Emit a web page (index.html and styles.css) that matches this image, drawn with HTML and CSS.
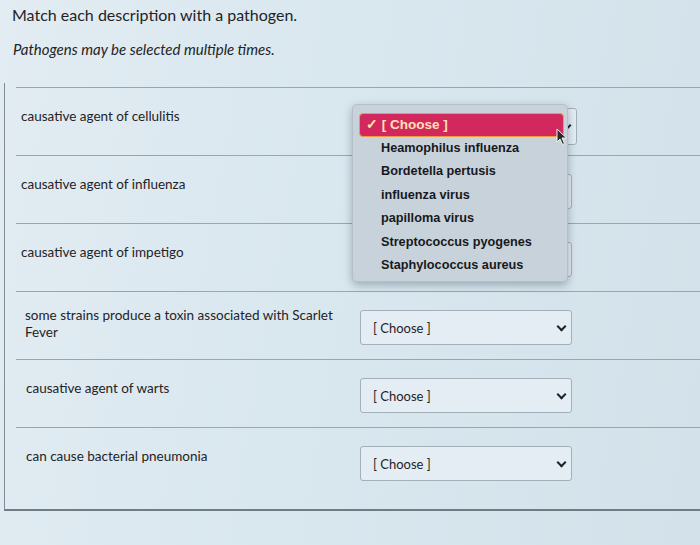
FILE: index.html
```html
<!DOCTYPE html>
<html>
<head>
	<link rel="stylesheet" href="styles.css">
	<title>Match each description with a pathogen</title>
</head>
<body>
	<div class="intro">
		<p class="title">Match each description with a pathogen.</p>
		<p class="note">Pathogens may be selected multiple times.</p>
	</div>

	<div class="quiz">
		<div class="row">
			<div class="label">causative agent of cellulitis</div>
			<div class="pick open">
				<div class="select under"><span>[ Choose ]</span><span class="chev"></span></div>
				<!-- open list of the first select -->
				<div class="menu">
					<div class="item current">&#10003; [ Choose ]</div>
					<div class="item">Heamophilus influenza</div>
					<div class="item">Bordetella pertusis</div>
					<div class="item">influenza virus</div>
					<div class="item">papilloma virus</div>
					<div class="item">Streptococcus pyogenes</div>
					<div class="item">Staphylococcus aureus</div>
				</div>
				<svg class="cursor" width="12" height="18" viewBox="0 0 12 18">
					<path d="M1 1 L1 14 L4 11 L6.5 16.5 L8.5 15.5 L6 10 L10.5 10 Z" fill="#2a2a2a" stroke="#f2f2f2" stroke-width="1"/>
				</svg>
			</div>
		</div>
		<div class="row">
			<div class="label">causative agent of influenza</div>
			<div class="pick">
				<div class="select under"><span>[ Choose ]</span><span class="chev"></span></div>
			</div>
		</div>
		<div class="row">
			<div class="label">causative agent of impetigo</div>
			<div class="pick">
				<div class="select under"><span>[ Choose ]</span><span class="chev"></span></div>
			</div>
		</div>
		<div class="row">
			<div class="label">some strains produce a toxin associated with Scarlet Fever</div>
			<div class="pick">
				<div class="select"><span>[ Choose ]</span><span class="chev"></span></div>
			</div>
		</div>
		<div class="row">
			<div class="label">causative agent of warts</div>
			<div class="pick">
				<div class="select"><span>[ Choose ]</span><span class="chev"></span></div>
			</div>
		</div>
		<div class="row last">
			<div class="label">can cause bacterial pneumonia</div>
			<div class="pick">
				<div class="select"><span>[ Choose ]</span><span class="chev"></span></div>
			</div>
		</div>
	</div>
</body>
</html>
```

FILE: styles.css
```css
body{
	margin:0;
	height:545px;
	overflow:hidden;
	background:linear-gradient(100deg, #e2ecf2 0%, #d9e7ef 45%, #d3e1ea 100%);
	font-family:Lato, "Liberation Sans", sans-serif;
	color:#1f2326;
}
.intro
{
	padding:5px 0 0 12px;
	height:83px;
	box-sizing:border-box;
}
.title
{
	margin:0;
	font-size:16px;
	line-height:20px;
}
.note
{
	margin:14px 0 0 1px;
	font-size:15px;
	font-style:italic;
	line-height:20px;
}
.quiz
{
	margin-left:4px;
	border-left:1px solid #7d8c96;
	border-bottom:2px solid #6f7c86;
	padding-top:4px;
}
.row
{
	margin-left:11px;
	border-top:1px solid #98a6b0;
	height:67px;
	display:flex;
}
.row.last
{
	height:81px;
}
.label
{
	width:320px;
	padding:20px 0 0 5px;
	font-size:13.5px;
	line-height:17px;
	box-sizing:border-box;
}
.row:nth-child(4) .label
{
	padding-top:15px;
	padding-left:9px;
}
.row:nth-child(5) .label,
.row:nth-child(6) .label
{
	padding-left:10px;
}
.pick
{
	margin-left:24px;
	padding-top:18px;
	position:relative;
}
.select
{
	width:212px;
	height:35px;
	box-sizing:border-box;
	border:1px solid #a3b0b9;
	border-radius:3px;
	background:#e4edf3;
	display:flex;
	align-items:center;
	justify-content:space-between;
	padding:0 6px 0 12px;
	font-size:13px;
}
/* selects hidden behind the open list */
.select.under span:first-child
{
	visibility:hidden;
}
.chev
{
	width:5px;
	height:5px;
	border-right:2px solid #1e2226;
	border-bottom:2px solid #1e2226;
	transform:rotate(45deg);
	margin-top:-3px;
}
.open
{
	z-index:2;
}
.open .select
{
	width:217px;
	height:37px;
	margin-top:2px;
}
.menu
{
	position:absolute;
	left:-8px;
	top:16px;
	width:216px;
	height:178px;
	box-sizing:border-box;
	padding:8px 3px 0 6px;
	background:#c8d2db;
	border:1px solid #b4bfc8;
	border-radius:5px;
	box-shadow:0 3px 8px rgba(40,55,70,0.35);
	font-family:"Liberation Sans", Arial, sans-serif;
	font-weight:bold;
	font-size:12.7px;
	color:#17191c;
}
.item
{
	height:23.4px;
	line-height:23.4px;
	padding-left:22px;
}
.item.current
{
	height:24px;
	line-height:22px;
	box-sizing:border-box;
	padding-left:6px;
	background:#d3285d;
	border:1px solid #eb9a47;
	border-radius:4px;
	color:#fde3b4;
	font-size:13.5px;
}
.cursor
{
	position:absolute;
	left:196px;
	top:40px;
}
```
